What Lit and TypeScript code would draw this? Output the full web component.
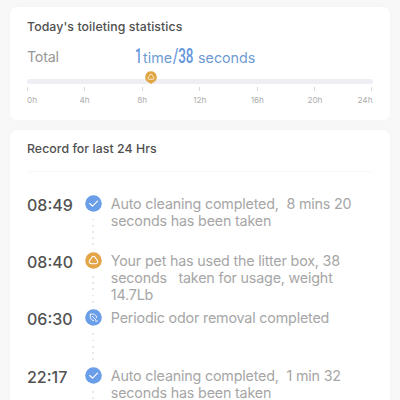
import { LitElement, html, svg, css } from "lit";
import { customElement, property } from "lit/decorators.js";

type Kind = "done" | "pet" | "odor";

@customElement("status-badge")
class StatusBadge extends LitElement {
  @property() kind: Kind = "done";
  static styles = css`
    :host { display: block; width: 17px; height: 17px; }
    svg { display: block; width: 100%; height: 100%; }
  `;
  render() {
    const glyph = {
      done: svg`<path d="M4.7 8.5 L7.5 11.1 L12.6 6.1" stroke-width="1.15"/>`,
      pet: svg`<path d="M8.5 4.3 C9.8 4.3 10.3 5.3 10.8 6.3 C11.7 7.7 13 8.6 12.7 10.2 C12.4 11.7 11.1 11.9 9.9 11.8 Q8.5 11.5 7.1 11.8 C5.9 11.9 4.6 11.7 4.3 10.2 C4 8.6 5.3 7.7 6.2 6.3 C6.7 5.3 7.2 4.3 8.5 4.3 Z" stroke-width="1.1"/>`,
      odor: svg`<path d="M5.4 5.2 C8.3 4.6 11.3 5.2 11.6 8.6 M5.4 5.2 C4.8 8.3 5.6 11.3 8.6 11.6 M7.2 7.2 L10.6 10.6 M10.4 12 H12.4" stroke-width=".95"/>`,
    }[this.kind];
    return html`<svg viewBox="0 0 17 17" fill="none" stroke="#fff" stroke-linecap="round" stroke-linejoin="round">
      <circle cx="8.5" cy="8.5" r="8.3" stroke="none" fill=${this.kind === "pet" ? "#e3a547" : "#6b9ee8"}></circle>${glyph}</svg>`;
  }
}

@customElement("usage-card")
class UsageCard extends LitElement {
  static styles = css`
    :host { display: block; box-sizing: border-box; height: 113px; padding: 12px 17px 0; background: #fff; border-radius: 7px; box-shadow: 0 0 8px rgba(0,0,0,.018); }
    h2 { margin: 0; font-size: 12.3px; font-weight: 500; line-height: 16px; letter-spacing: .09px; color: #505050; white-space: nowrap; }
    .summary { display: flex; height: 24px; margin-top: 11px; align-items: baseline; white-space: nowrap; }
    .total { width: 108px; font-size: 14.3px; color: #979797; line-height: 24px; letter-spacing: -.25px; position: relative; top: -1px; }
    .value { display: flex; align-items: baseline; color: #6e9bd2; font-size: 14.3px; line-height: 18px; }
    .num { display: block; height: 15px; overflow: visible; }
    .num text { font: 500 20px Roboto, sans-serif; fill: #6396dc; }
    .unit { width: 30px; margin-left: 1px; letter-spacing: .05px; }
    .sec { margin-left: 4px; }
    .track { position: relative; height: 5px; margin-top: 9px; border-radius: 3px; background: #eeeff4; }
    .pin { position: absolute; width: 12px; height: 13px; top: -8.5px; transform: translateX(-50%); }
    .ticks { display: flex; justify-content: space-between; margin-top: 3px; }
    .ticks i { width: 1px; height: 4px; background: #d9d9dc; }
    .hours { display: flex; justify-content: space-between; margin-top: 4px; font-size: 8.2px; line-height: 10px; color: #acacac; }
    .hours span { width: 0; display: flex; justify-content: center; }
    .hours span:first-child { justify-content: flex-start; }
    .hours span:last-child { justify-content: flex-end; }
  `;
  render() {
    const hours = [0, 4, 8, 12, 16, 20, 24];
    return html`
      <h2>Today's toileting statistics</h2>
      <div class="summary">
        <span class="total">Total</span>
        <span class="value">
          <svg class="num" width="7" height="15"><text x="0" y="15" textLength="7" lengthAdjust="spacingAndGlyphs">1</text></svg>
          <span class="unit">time</span>
          <svg class="num" width="21" height="15"><text x="0" y="15" textLength="20.5" lengthAdjust="spacingAndGlyphs">/38</text></svg>
          <span class="sec">seconds</span>
        </span>
      </div>
      <div class="track">
        <svg class="pin" style="left:${(8.6 / 24) * 100}%" viewBox="0 0 12 13">
          <path d="M6 .2 A5.8 5.8 0 0 1 8.5 11.2 L6 13 L3.5 11.2 A5.8 5.8 0 0 1 6 .2 Z" fill="#e0a544"/>
          <path d="M6 3.2 C7.3 3.2 7.4 5 8.4 6 C9.5 7.4 8.8 8.6 7.4 8.3 Q6 8 4.6 8.3 C3.2 8.6 2.5 7.4 3.6 6 C4.6 5 4.7 3.2 6 3.2 Z" fill="none" stroke="#fff3dc" stroke-width=".9"/>
        </svg>
      </div>
      <div class="ticks">${hours.map(() => html`<i></i>`)}</div>
      <div class="hours">${hours.map((h) => html`<span>${h}h</span>`)}</div>
    `;
  }
}

interface Entry { time: string; kind: Kind; lines: string[]; }

const entries: Entry[] = [
  { time: "08:49", kind: "done", lines: ["Auto cleaning completed,  8 mins 20", "seconds has been taken"] },
  { time: "08:40", kind: "pet", lines: ["Your pet has used the litter box, 38", "seconds   taken for usage, weight", "14.7Lb"] },
  { time: "06:30", kind: "odor", lines: ["Periodic odor removal completed"] },
  { time: "22:17", kind: "done", lines: ["Auto cleaning completed,  1 min 32", "seconds has been taken"] },
];

@customElement("record-card")
class RecordCard extends LitElement {
  static styles = css`
    :host { display: block; box-sizing: border-box; height: 290px; padding: 11px 17px 0; background: #fff; border-radius: 7px; box-shadow: 0 0 8px rgba(0,0,0,.018); }
    h2 { margin: 0; padding-bottom: 14px; border-bottom: 1px solid #f8f8f8; font-size: 12.3px; font-weight: 500; line-height: 16px; letter-spacing: .07px; color: #505050; }
    .list { padding-top: 22.6px; }
    .row { display: grid; grid-template-columns: 57.6px 17px 1fr; height: 57.4px; }
    .time { font-size: 16px; font-weight: 500; line-height: 20px; color: #525252; }
    .rail { display: flex; flex-direction: column; align-items: center; }
    .dots { display: flex; flex-direction: column; gap: 4.4px; margin-top: 7px; }
    .dots i { width: 1.4px; height: 1.8px; background: #e8e8ea; }
    .text { padding-left: 9.2px; font-size: 14.3px; line-height: 17.2px; letter-spacing: -.18px; color: #a6a6a6; white-space: pre; }
    .text span { display: block; }
  `;
  render() {
    return html`<h2>Record for last 24 Hrs</h2>
      <div class="list">${entries.map((e) => html`
        <div class="row">
          <span class="time">${e.time}</span>
          <div class="rail"><status-badge .kind=${e.kind}></status-badge>
            <div class="dots">${[0, 1, 2, 3, 4].map(() => html`<i></i>`)}</div></div>
          <div class="text">${e.lines.map((l) => html`<span>${l}</span>`)}</div>
        </div>`)}</div>`;
  }
}

@customElement("app-root")
class AppRoot extends LitElement {
  static styles = css`
    :host { display: flex; flex-direction: column; gap: 10px; box-sizing: border-box; width: 400px; height: 400px; padding: 7px 10.5px 0 10px; overflow: hidden; background: #f8f8f8; font-family: Inter, "Liberation Sans", sans-serif; }
    usage-card, record-card { flex-shrink: 0; }
  `;
  render() {
    return html`<usage-card></usage-card><record-card></record-card>`;
  }
}
